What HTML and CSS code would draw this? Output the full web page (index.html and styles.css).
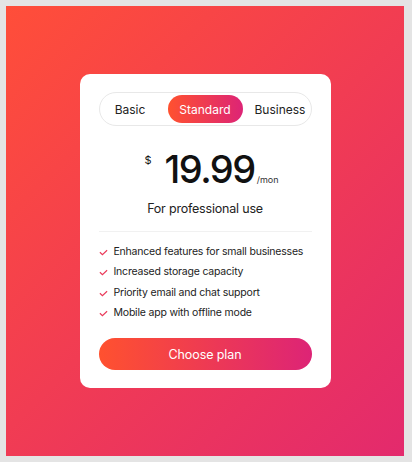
FILE: index.html
```html
<!DOCTYPE html>
<html lang="en">
<head>
    <meta charset="UTF-8">
    <meta name="viewport" content="width=device-width, initial-scale=1.0">
    <title>Pricing</title>
    <link rel="stylesheet" href="styles.css">
</head>
<body>
    <div class="stage">
        <div class="card">
            <div class="plan-switch">
                <button class="plan-tab">Basic</button>
                <button class="plan-tab active">Standard</button>
                <button class="plan-tab">Business</button>
            </div>

            <div class="price">
                <span class="currency">$</span>
                <span class="amount">19.99</span>
                <span class="period">/mon</span>
            </div>
            <div class="tagline">For professional use</div>

            <ul class="features">
                <li><svg class="check" viewBox="0 0 10 7"><path d="M1 3.2 L3.8 6 L9 1"/></svg>Enhanced features for small businesses</li>
                <li><svg class="check" viewBox="0 0 10 7"><path d="M1 3.2 L3.8 6 L9 1"/></svg>Increased storage capacity</li>
                <li><svg class="check" viewBox="0 0 10 7"><path d="M1 3.2 L3.8 6 L9 1"/></svg>Priority email and chat support</li>
                <li><svg class="check" viewBox="0 0 10 7"><path d="M1 3.2 L3.8 6 L9 1"/></svg>Mobile app with offline mode</li>
            </ul>

            <button class="choose-btn">Choose plan</button>
        </div>
    </div>
</body>
</html>
```

FILE: styles.css
```css
body {
    margin: 0;
    padding: 6px;
    background-color: #e4e4e4;
    font-family: Inter, "Liberation Sans", sans-serif;
}
.stage {
    width: 398px;
    height: 450px;
    display: flex;
    align-items: center;
    justify-content: center;
    background: linear-gradient(135deg, #ff4e39 0%, #e32a6d 100%);
}
.card {
    width: 213px;
    padding: 18px 19px 18px;
    background-color: white;
    border-radius: 10px;
}
.plan-switch {
    display: flex;
    justify-content: center;
    height: 28px;
    padding: 2px;
    border: 1px solid #e8e8e8;
    border-radius: 999px;
}
.plan-tab {
    flex-shrink: 0;
    width: 75px;
    height: 28px;
    padding: 0;
    border: none;
    border-radius: 999px;
    background: none;
    font-family: inherit;
    font-size: 12px;
    color: #222;
    cursor: pointer;
}
.plan-tab.active {
    background: linear-gradient(90deg, #ff512f, #dd2476);
    color: white;
}
.price {
    display: flex;
    justify-content: center;
    align-items: baseline;
    margin-top: 23px;
    padding-left: 13px;
    color: #111;
}
.currency {
    align-self: flex-start;
    font-size: 11px;
    margin-top: 4px;
    margin-right: 13px;
}
.amount {
    font-size: 38px;
    font-weight: 500;
    line-height: 40px;
    letter-spacing: -1.5px;
    margin-right: 2px;
}
.period {
    font-size: 9px;
    color: #333;
}
.tagline {
    margin-top: 12px;
    padding-bottom: 15px;
    border-bottom: 1px solid #f1f1f1;
    text-align: center;
    font-size: 12.5px;
    letter-spacing: -0.2px;
    color: #222;
}
.features {
    list-style: none;
    margin: 11px 0 0;
    padding: 0;
    display: flex;
    flex-direction: column;
    gap: 4.5px;
}
.features li {
    display: flex;
    align-items: center;
    height: 16px;
    white-space: nowrap;
    font-size: 10.5px;
    letter-spacing: -0.2px;
    color: #222;
}
.check {
    width: 9px;
    height: 7px;
    margin-right: 6px;
    margin-top: 2px;
    fill: none;
    stroke: #ea3a5a;
    stroke-width: 1.3;
}
.choose-btn {
    display: block;
    width: 100%;
    height: 32px;
    margin-top: 17.5px;
    border: none;
    border-radius: 999px;
    background: linear-gradient(90deg, #ff512f, #dd2476);
    color: white;
    font-family: inherit;
    font-size: 12.5px;
    letter-spacing: -0.1px;
    cursor: pointer;
}
```
